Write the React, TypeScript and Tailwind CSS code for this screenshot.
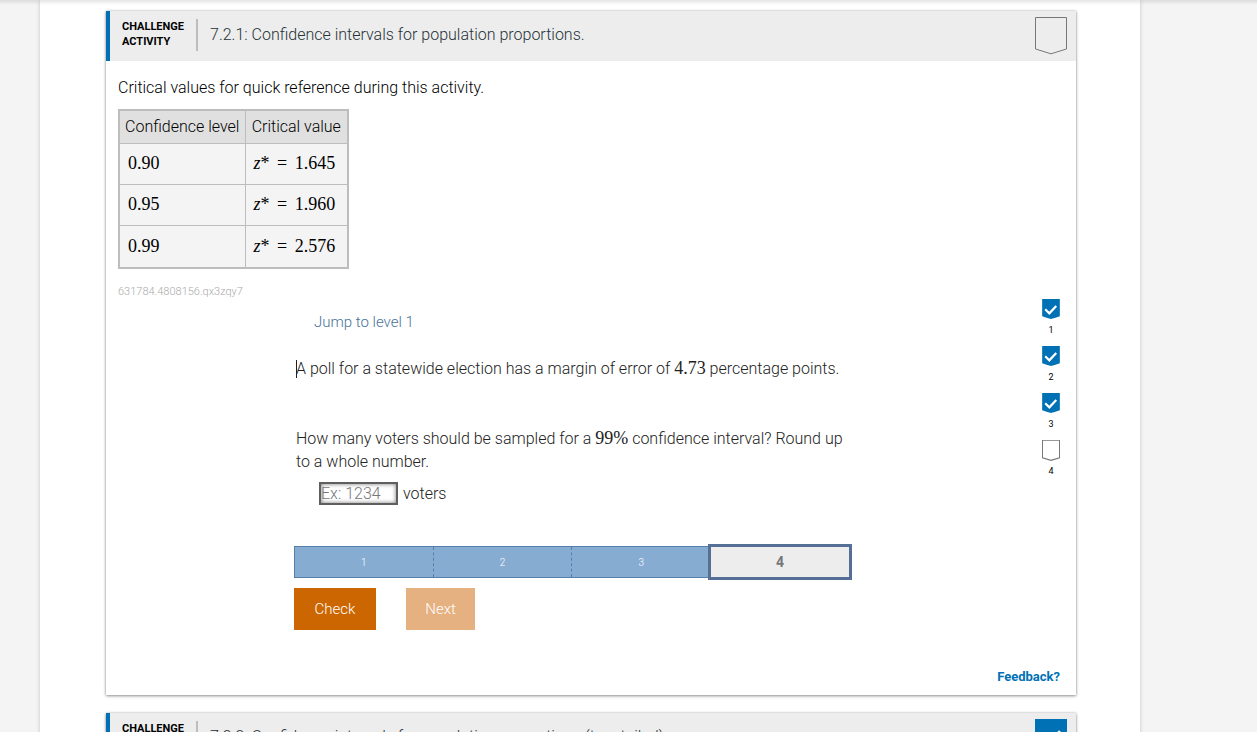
import { useState } from "react";

const CRITICAL_VALUES = [
  { level: "0.90", value: "1.645" },
  { level: "0.95", value: "1.960" },
  { level: "0.99", value: "2.576" },
];

const LEVELS = [1, 2, 3, 4];
const CURRENT_LEVEL = 4;

function Num({ children }: { children: React.ReactNode }) {
  return (
    <span className="font-['Liberation_Serif',serif] text-[18px] leading-none font-normal">
      {children}
    </span>
  );
}

function Badge({ done, size }: { done: boolean; size: "sm" | "lg" }) {
  return (
    <svg
      viewBox="0 0 32 38"
      className={size === "lg" ? "h-[38px] w-8 shrink-0" : "h-[21px] w-[18px] shrink-0"}
      role="img"
      aria-label={done ? "Completed" : "Not completed"}
    >
      {done ? (
        <>
          <path d="M0 0H32V31Q24 34 16 36Q8 34 0 31Z" fill="#0071b5" />
          <path d="M5.5 18.5L13 26L25.5 12.5" fill="none" stroke="#fff" strokeWidth="4" />
        </>
      ) : (
        <path
          d="M0.5 0.5H31.5V32L16 36.8L0.5 32Z"
          fill={size === "lg" ? "none" : "#fff"}
          stroke="#777"
          strokeWidth={size === "lg" ? 1 : 2}
        />
      )}
    </svg>
  );
}

function ActivityHeader({ title, done }: { title: string; done: boolean }) {
  return (
    <header className="flex h-[50px] items-center border-l-4 border-[#0071b5] bg-[#ededed] pr-[9px] pl-3">
      <div className="mb-1 w-[74px] text-[11px] leading-[15px] font-bold text-black uppercase">
        Challenge
        <br />
        activity
      </div>
      <div className="mb-0.5 h-8 w-0.5 bg-[#bdbdbd]" />
      <h2 className="mb-0.5 ml-3 flex-1 text-[16px] font-light text-[#263238]">{title}</h2>
      <Badge done={done} size="lg" />
    </header>
  );
}

function CriticalTable() {
  return (
    <table className="mt-[9px] h-[160px] w-[231px] table-fixed border-collapse border-2 border-[#bdbdbd] text-[16px] text-black">
      <thead>
        <tr className="h-[33px] bg-[#e0e0e0]">
          <th className="w-[126px] border border-[#bdbdbd] text-center font-light whitespace-nowrap">
            Confidence level
          </th>
          <th className="border border-[#bdbdbd] text-center font-light whitespace-nowrap">
            Critical value
          </th>
        </tr>
      </thead>
      <tbody>
        {CRITICAL_VALUES.map((row) => (
          <tr key={row.level} className="bg-[#f4f4f4]">
            <td className="border border-[#bdbdbd] px-2">
              <Num>{row.level}</Num>
            </td>
            <td className="border border-[#bdbdbd] px-2 whitespace-nowrap">
              <Num>
                <i>z</i>* <span className="mx-[3px]">=</span> {row.value}
              </Num>
            </td>
          </tr>
        ))}
      </tbody>
    </table>
  );
}

function LevelBar() {
  return (
    <div className="mt-[39px] flex items-center text-center">
      <div className="flex h-8 flex-1 border border-r-0 border-[#5580ab] bg-[#87acd2]">
        {LEVELS.filter((n) => n < CURRENT_LEVEL).map((n) => (
          <div
            key={n}
            className="flex flex-1 items-center justify-center border-r border-dashed border-[#5580ab] text-[10px] text-white last:border-r-0"
          >
            {n}
          </div>
        ))}
      </div>
      <div className="-ml-0.5 flex h-9 w-[144px] shrink-0 items-center justify-center border-3 border-[#566f96] bg-[#ededed] text-[14px] font-bold text-[#777]">
        {CURRENT_LEVEL}
      </div>
    </div>
  );
}

function Question() {
  const [answer, setAnswer] = useState("");

  return (
    <div className="ml-[176px] w-[558px] shrink-0 pt-3 text-[16px] leading-[23px] text-[#222]">
      <a href="#level-1" className="ml-5 block text-[15px] text-[#487299]">
        Jump to level 1
      </a>
      <p className="mt-[23px] pl-0.5">
        <span className="-mr-px inline-block h-[18px] w-px bg-[#222] align-text-bottom" />A poll for
        a statewide election has a margin of error of <Num>4.73</Num> percentage points.
      </p>
      <p className="mt-[47px] pl-0.5">
        How many voters should be sampled for a <Num>99%</Num> confidence interval? Round up
        <br />
        to a whole number.
      </p>
      <div className="mt-[9px] ml-[25px] flex items-center gap-[5px]">
        <input
          id="answer"
          value={answer}
          onChange={(e) => setAnswer(e.target.value)}
          placeholder="Ex: 1234"
          className="h-[23px] w-[79px] border-2 border-[#5f5f5f] bg-white text-[16px] font-light shadow-[inset_0_0_4px_#777] placeholder:text-[#777]"
        />
        <label htmlFor="answer">voters</label>
      </div>
      <LevelBar />
      <div className="mt-2 flex gap-[30px] text-[15px] text-white">
        <button className="h-[42px] w-[82px] bg-[#cc6600]">Check</button>
        <button disabled className="h-[42px] w-[69px] bg-[#e5b180]">
          Next
        </button>
      </div>
    </div>
  );
}

export default function App() {
  return (
    <div className="h-screen overflow-hidden bg-[#f4f4f4] font-['Roboto',sans-serif] font-light">
      <main className="mr-[117px] ml-10 min-h-screen bg-white pt-[11px] pr-16 pl-[66px] shadow-[0_0_4px_#00000033]">
        <section className="bg-white shadow-[0_0_2px_#00000033,0_1px_3px_#00000066]">
          <ActivityHeader title="7.2.1: Confidence intervals for population proportions." done={false} />
          <div className="pt-[15px] pr-4 pb-[7px] pl-3">
            <p className="text-[16px] leading-6 text-black">
              Critical values for quick reference during this activity.
            </p>
            <CriticalTable />
            <p className="mt-4 text-[11px] leading-[14px] text-[#aaa]">631784.4808156.qx3zqy7</p>
            <div className="flex justify-between">
              <Question />
              <ol className="flex w-[18px] flex-col items-center">
                {LEVELS.map((n) => (
                  <li key={n} className="flex h-[47px] flex-col items-center text-[9px] font-normal text-black">
                    <Badge done={n < CURRENT_LEVEL} size="sm" />
                    <span className="mt-1 leading-3">{n}</span>
                  </li>
                ))}
              </ol>
            </div>
            <div className="mt-[34px] text-right">
              <a href="#feedback" className="text-[13px] leading-5 font-bold text-[#0071b5]">
                Feedback?
              </a>
            </div>
          </div>
        </section>

        <section className="mt-[18px] bg-white shadow-[0_0_2px_#00000033,0_1px_3px_#00000066]">
          <ActivityHeader
            title="7.2.2: Confidence intervals for population proportions (two-tailed)."
            done={true}
          />
        </section>
      </main>
      <div className="pointer-events-none absolute inset-x-0 top-0 h-[5px] bg-linear-to-b from-black/10 to-transparent" />
    </div>
  );
}
